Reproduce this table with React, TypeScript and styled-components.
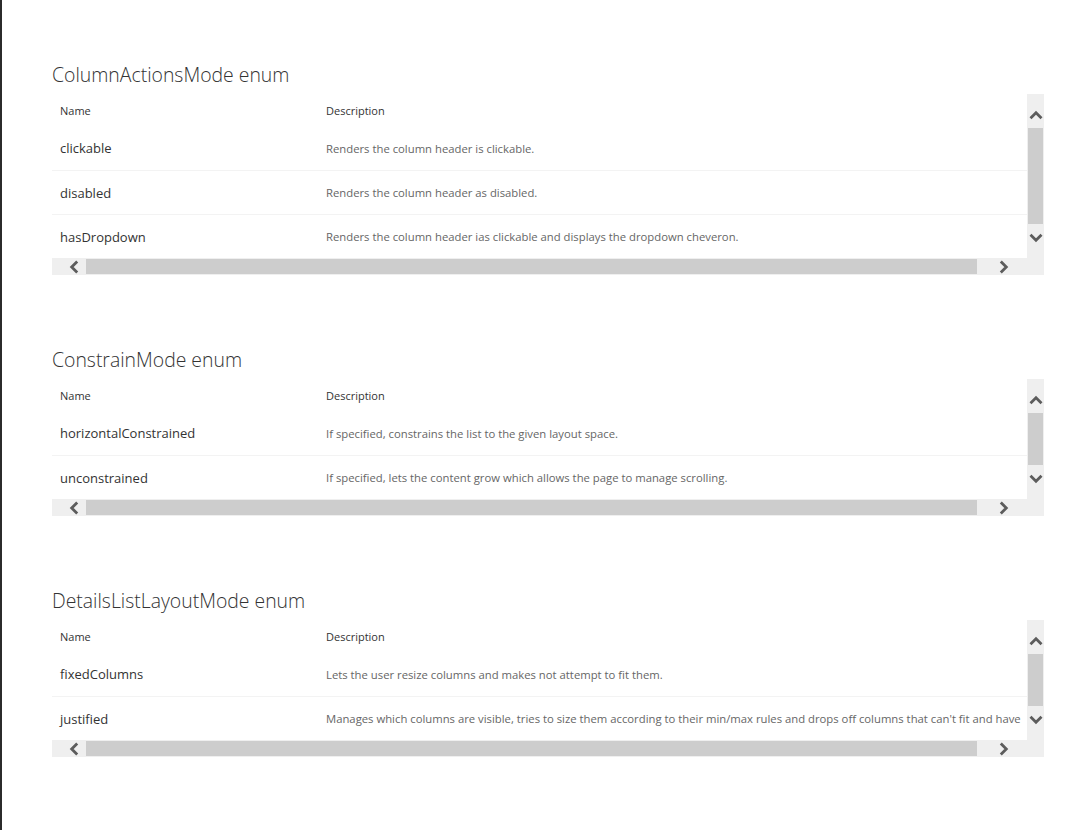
import React from "react";
import styled, { createGlobalStyle } from "styled-components";

const Global = createGlobalStyle`
  html, body { margin: 0; padding: 0; background: #fff; }
  body { font-family: "Open Sans", "Noto Sans", Arial, sans-serif; color: #333; }
`;

const Page = styled.div`
  min-height: 830px;
  box-sizing: border-box;
  border-left: 2px solid #2b2b2b;
  padding: 61px 47px 40px 50px;
  display: flex;
  flex-direction: column;
  gap: 71px;
`;

const Section = styled.section`
  display: flex;
  flex-direction: column;
  gap: 5px;
`;

const Title = styled.h2`
  margin: 0;
  font-family: "Open Sans", "Noto Sans", sans-serif;
  font-weight: 300;
  font-size: 19.4px;
  line-height: 28px;
  color: #333;
`;

const Frame = styled.div`
  display: grid;
  grid-template-columns: 1fr 17px;
  grid-template-rows: auto 17px;
  width: 992px;
`;

const Body = styled.div`
  overflow: hidden;
  min-width: 0;
`;

const HeaderRow = styled.div`
  display: flex;
  align-items: center;
  height: 32px;
  white-space: nowrap;
`;

const Row = styled.div`
  display: flex;
  align-items: center;
  height: 44px;
  box-sizing: border-box;
  white-space: nowrap;
  & + & {
    border-top: 1px solid #f3f3f3;
  }
`;

const NameCell = styled.div<{ $header?: boolean }>`
  flex: 0 0 266px;
  box-sizing: border-box;
  padding-left: 8px;
  font-size: ${(p) => (p.$header ? "11px" : "13px")};
  color: #333;
`;

const DescCell = styled.div<{ $header?: boolean }>`
  flex: 0 0 auto;
  padding-left: 8px;
  font-size: ${(p) => (p.$header ? "11px" : "11.3px")};
  color: ${(p) => (p.$header ? "#333" : "#666")};
`;

const VBar = styled.div`
  background: #efefef;
  display: flex;
  flex-direction: column;
`;

const VBtn = styled.div<{ $down?: boolean }>`
  height: 34px;
  display: flex;
  justify-content: center;
  align-items: ${(p) => (p.$down ? "flex-start" : "flex-end")};
  padding: ${(p) => (p.$down ? "9px 0 0" : "0 0 8px")};
  box-sizing: border-box;
  flex: 0 0 auto;
`;

const VThumb = styled.div`
  flex: 1;
  margin: 0 1px;
  background: #cdcdcd;
`;

const HBar = styled.div`
  grid-column: 1 / 3;
  background: #efefef;
  display: flex;
  align-items: stretch;
`;

const HBtn = styled.div<{ $right?: boolean }>`
  flex: 0 0 34px;
  display: flex;
  align-items: center;
  justify-content: ${(p) => (p.$right ? "flex-start" : "flex-end")};
  padding: ${(p) => (p.$right ? "0 0 0 6px" : "0 7px 0 0")};
  box-sizing: border-box;
`;

const HThumb = styled.div`
  flex: 1;
  margin: 1px 16px 1px 0;
  background: #cdcdcd;
`;

const Corner = styled.div`
  flex: 0 0 17px;
`;

const Chevron = ({ dir }: { dir: "up" | "down" | "left" | "right" }) => {
  const vertical = dir === "up" || dir === "down";
  const w = vertical ? 14 : 10;
  const h = vertical ? 10 : 14;
  const d =
    dir === "up"
      ? "M1.5 8.2 L7 2.7 L12.5 8.2"
      : dir === "down"
      ? "M1.5 1.8 L7 7.3 L12.5 1.8"
      : dir === "left"
      ? "M8.2 1.5 L2.7 7 L8.2 12.5"
      : "M1.8 1.5 L7.3 7 L1.8 12.5";
  return (
    <svg width={w} height={h} viewBox={`0 0 ${w} ${h}`}>
      <path d={d} fill="none" stroke="#5c5c5c" strokeWidth="2.8" />
    </svg>
  );
};

type Item = { name: string; desc: string };

const EnumTable = ({ title, items }: { title: string; items: Item[] }) => (
  <Section>
    <Title>{title}</Title>
    <Frame>
      <Body>
        <HeaderRow>
          <NameCell $header>Name</NameCell>
          <DescCell $header>Description</DescCell>
        </HeaderRow>
        <div>
          {items.map((it) => (
            <Row key={it.name}>
              <NameCell>{it.name}</NameCell>
              <DescCell>{it.desc}</DescCell>
            </Row>
          ))}
        </div>
      </Body>
      <VBar>
        <VBtn>
          <Chevron dir="up" />
        </VBtn>
        <VThumb />
        <VBtn $down>
          <Chevron dir="down" />
        </VBtn>
      </VBar>
      <HBar>
        <HBtn>
          <Chevron dir="left" />
        </HBtn>
        <HThumb />
        <HBtn $right>
          <Chevron dir="right" />
        </HBtn>
        <Corner />
      </HBar>
    </Frame>
  </Section>
);

export default function App() {
  return (
    <>
      <Global />
      <Page>
        <EnumTable
          title="ColumnActionsMode enum"
          items={[
            { name: "clickable", desc: "Renders the column header is clickable." },
            { name: "disabled", desc: "Renders the column header as disabled." },
            {
              name: "hasDropdown",
              desc: "Renders the column header ias clickable and displays the dropdown cheveron.",
            },
          ]}
        />
        <EnumTable
          title="ConstrainMode enum"
          items={[
            {
              name: "horizontalConstrained",
              desc: "If specified, constrains the list to the given layout space.",
            },
            {
              name: "unconstrained",
              desc: "If specified, lets the content grow which allows the page to manage scrolling.",
            },
          ]}
        />
        <EnumTable
          title="DetailsListLayoutMode enum"
          items={[
            {
              name: "fixedColumns",
              desc: "Lets the user resize columns and makes not attempt to fit them.",
            },
            {
              name: "justified",
              desc: "Manages which columns are visible, tries to size them according to their min/max rules and drops off columns that can't fit and have",
            },
          ]}
        />
      </Page>
    </>
  );
}
